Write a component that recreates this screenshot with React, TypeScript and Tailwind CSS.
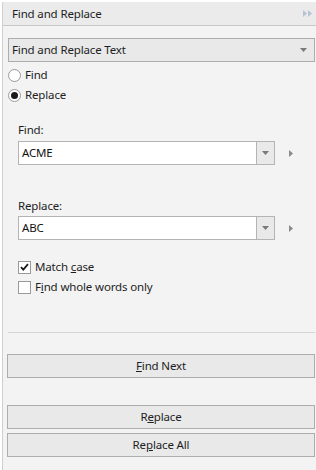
import { useState } from 'react';

function Caret() {
  return (
    <svg width="7" height="4" viewBox="0 0 7 4" className="block">
      <path d="M0 0h7L3.5 4z" fill="#7a7a7a" />
    </svg>
  );
}

function SideArrow() {
  return (
    <svg width="4" height="7" viewBox="0 0 4 7" className="block">
      <path d="M0 0v7l4-3.5z" fill="#8a8a8a" />
    </svg>
  );
}

function ComboInput({ value }: { value: string }) {
  return (
    <div className="flex items-center">
      <div className="flex h-[24px] w-[257px] border border-[#b4b4b4] bg-white">
        <div className="flex flex-1 items-center pl-[3px] text-[#111]">{value}</div>
        <div className="flex w-[18px] items-center justify-center border-l border-[#b4b4b4] bg-[#e9e9e9]">
          <Caret />
        </div>
      </div>
      <div className="ml-[14px]">
        <SideArrow />
      </div>
    </div>
  );
}

function Radio({ checked, label, onClick }: { checked: boolean; label: string; onClick: () => void }) {
  return (
    <button onClick={onClick} className="flex h-[20px] items-center text-left">
      <span className="flex h-[13px] w-[13px] items-center justify-center rounded-full border border-[#9a9a9a] bg-white">
        {checked && <span className="h-[7px] w-[7px] rounded-full bg-[#1a1a1a]" />}
      </span>
      <span className="ml-[4px] text-[#1e1e1e]">{label}</span>
    </button>
  );
}

function Check({ checked, children, onClick }: { checked: boolean; children: React.ReactNode; onClick: () => void }) {
  return (
    <button onClick={onClick} className="flex h-[20px] items-center text-left">
      <span className="flex h-[13px] w-[13px] items-center justify-center border border-[#9a9a9a] bg-white">
        {checked && (
          <svg width="9" height="8" viewBox="0 0 9 8">
            <path d="M1 4.2l2.3 2.4L8 1.2" fill="none" stroke="#1a1a1a" strokeWidth="1.8" />
          </svg>
        )}
      </span>
      <span className="ml-[4px] text-[#1e1e1e]">{children}</span>
    </button>
  );
}

function PanelButton({ children }: { children: React.ReactNode }) {
  return (
    <button className="flex h-[24px] w-full items-center justify-center border border-[#adadad] bg-[#e9e9e9] text-[#1e1e1e]">
      {children}
    </button>
  );
}

export default function App() {
  const [mode, setMode] = useState<'find' | 'replace'>('replace');
  const [matchCase, setMatchCase] = useState(true);
  const [wholeWords, setWholeWords] = useState(false);

  return (
    <div
      className="h-[470px] w-[316px] overflow-hidden bg-white pl-[2px] pt-[2px] text-[11.5px] leading-[16px] tracking-[-0.15px]"
      style={{ fontFamily: '"Noto Sans", "Open Sans", sans-serif' }}
    >
      <div className="flex h-full flex-col border-l border-[#cfcfcf] bg-[#f3f3f3]">
        {/* Header */}
        <div className="flex h-[24px] items-center justify-between border-b border-[#c9c9c9] bg-[#ebebeb] pl-[9px] pr-[4px]">
          <span className="text-[#1e1e1e]">Find and Replace</span>
          <svg width="9" height="7" viewBox="0 0 9 7">
            <path d="M0 0v7l4-3.5zM5 0v7l4-3.5z" fill="#b7c4d4" />
          </svg>
        </div>

        <div className="flex flex-1 flex-col pl-[5px] pr-[1px]">
          {/* Mode dropdown */}
          <div className="mt-[12px] flex h-[24px] items-center justify-between border border-[#adadad] bg-[#e9e9e9] pl-[3px] pr-[7px]">
            <span className="text-[#1e1e1e]">Find and Replace Text</span>
            <Caret />
          </div>

          <div className="mt-[3px] flex flex-col">
            <Radio checked={mode === 'find'} label="Find" onClick={() => setMode('find')} />
            <Radio checked={mode === 'replace'} label="Replace" onClick={() => setMode('replace')} />
          </div>

          <div className="flex flex-col pl-[10px]">
            <div className="mt-[17px] text-[#1e1e1e]">Find:</div>
            <div className="mt-[3px]">
              <ComboInput value="ACME" />
            </div>

            <div className="mt-[33px] text-[#1e1e1e]">Replace:</div>
            <div className="mt-[2px]">
              <ComboInput value="ABC" />
            </div>

            <div className="mt-[17px] flex flex-col">
              <Check checked={matchCase} onClick={() => setMatchCase(!matchCase)}>
                Match <span className="underline">c</span>ase
              </Check>
              <Check checked={wholeWords} onClick={() => setWholeWords(!wholeWords)}>
                F<span className="underline">i</span>nd whole words only
              </Check>
            </div>
          </div>

          <div className="mt-[35px] border-t border-[#d6d6d6]" />

          <div className="mt-[21px] -ml-[1px]">
            <PanelButton>
              <span className="underline">F</span>ind Next
            </PanelButton>
          </div>

          <div className="mt-[27px] -ml-[1px] flex flex-col gap-[4px]">
            <PanelButton>
              R<span className="underline">e</span>place
            </PanelButton>
            <PanelButton>
              Re<span className="underline">p</span>lace All
            </PanelButton>
          </div>
        </div>
      </div>
    </div>
  );
}
